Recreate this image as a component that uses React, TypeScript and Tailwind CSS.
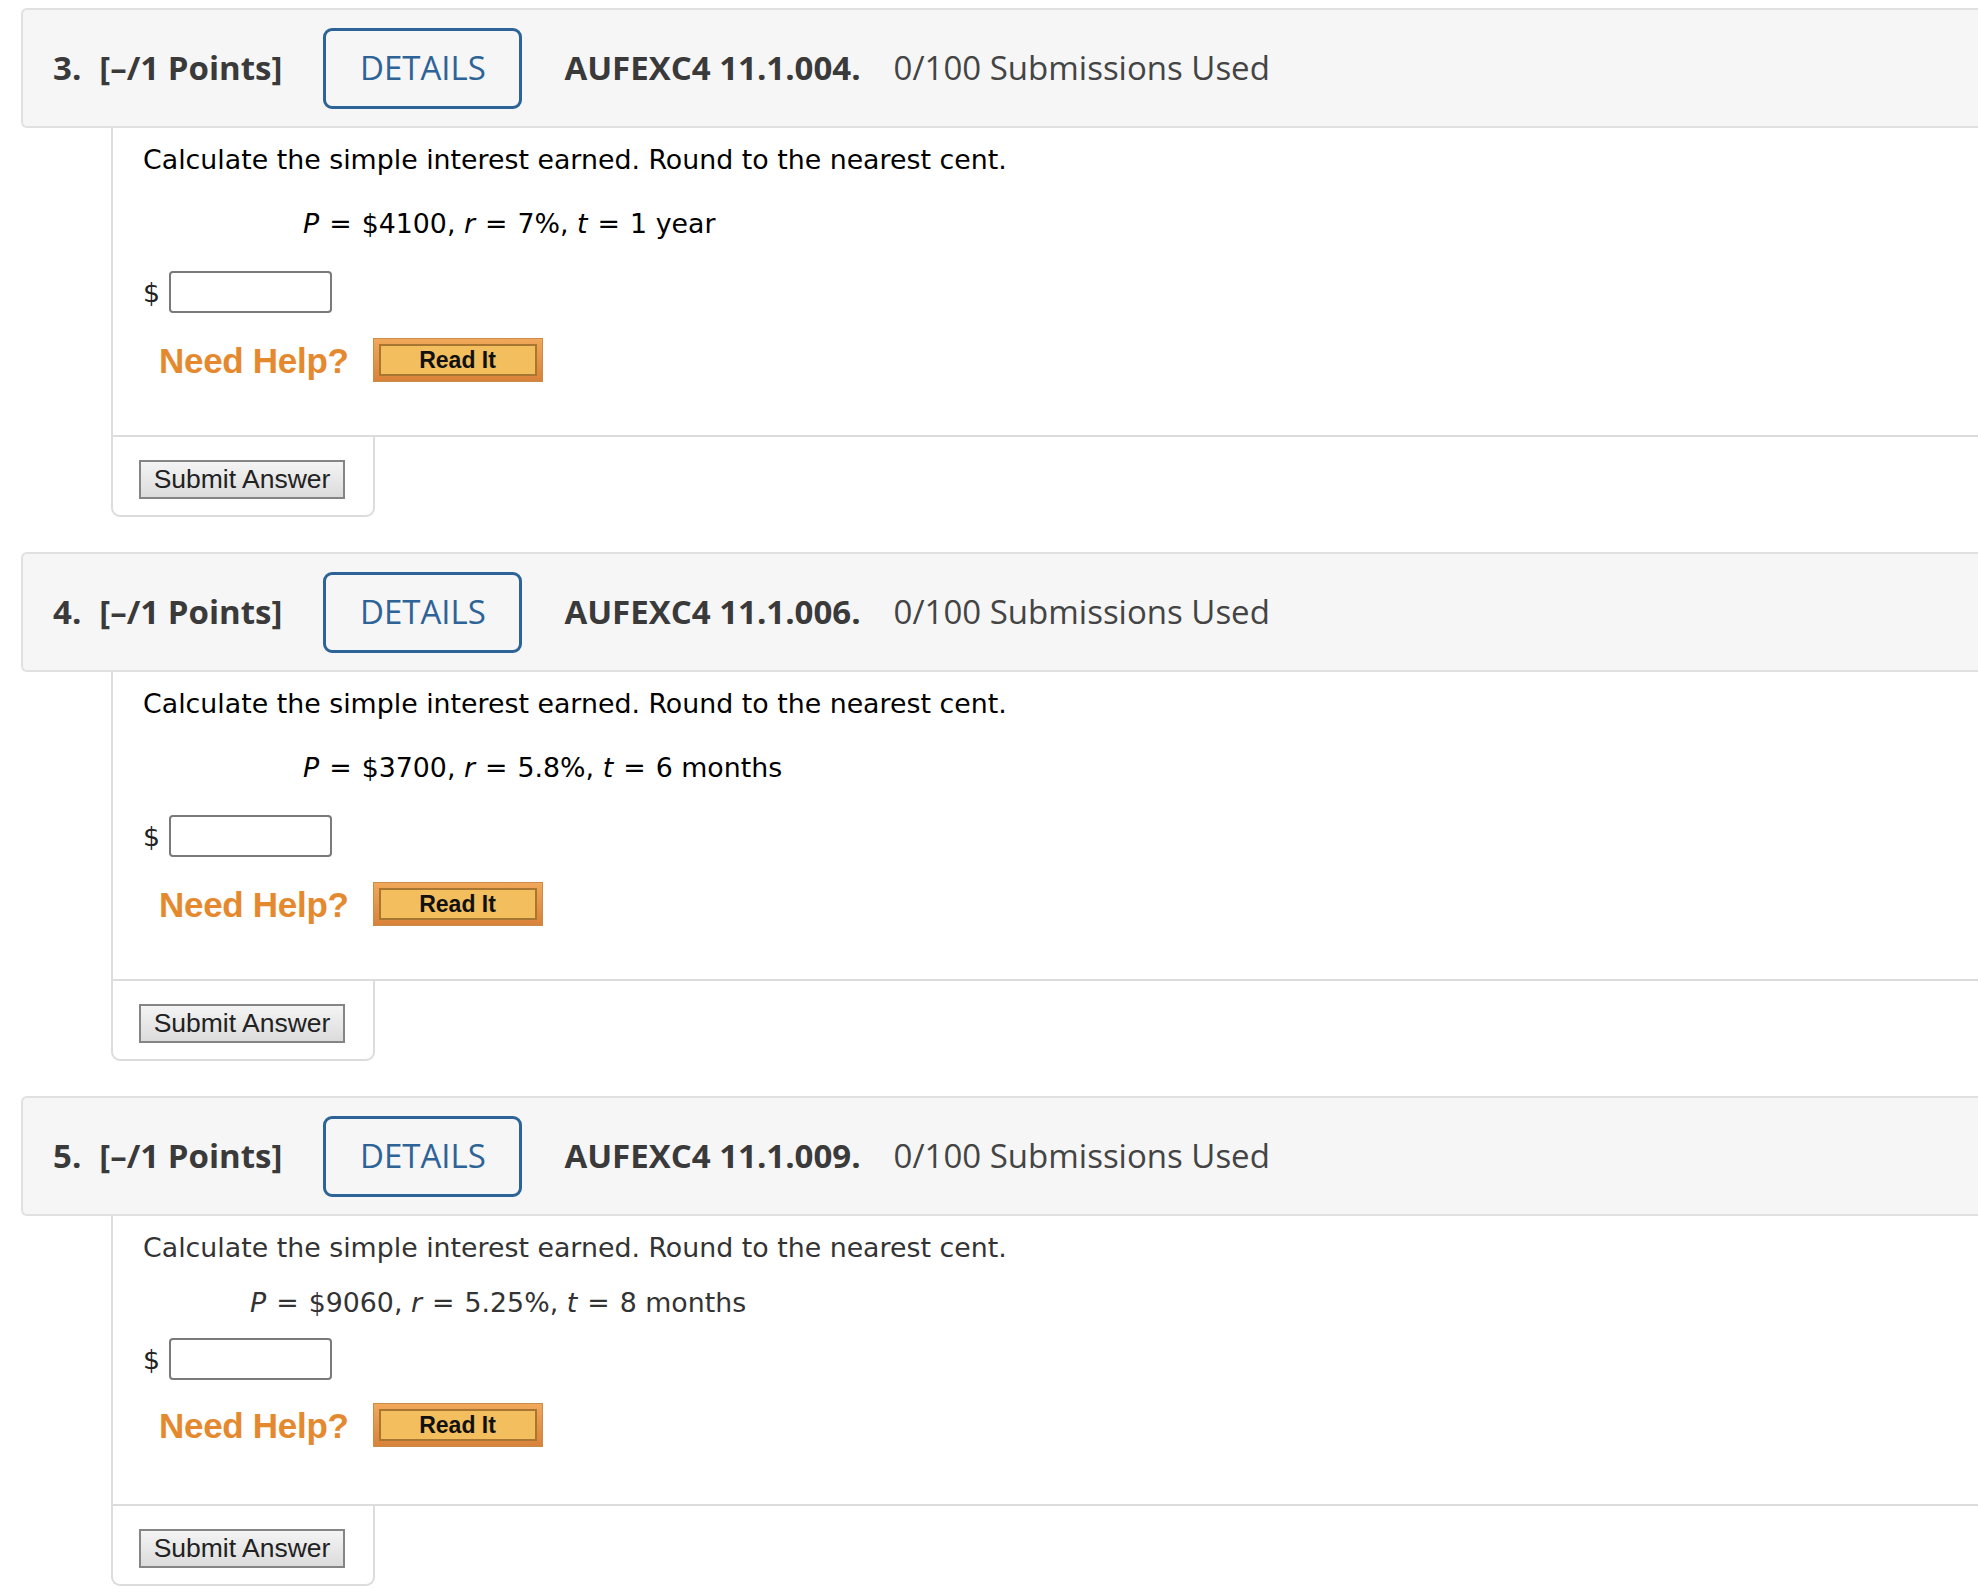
import type { ReactNode } from 'react';

type QuestionProps = {
  num: number;
  code: string;
  formula: ReactNode;
  compact?: boolean;
};

// spaced "=" like the math renderer does
const Eq = () => <span className="mx-[1.5px]">=</span>;

const Question = ({ num, code, formula, compact }: QuestionProps) => {
  return (
    <div>
      {/* header bar */}
      <div className="ml-[21px] h-[120px] bg-[#f6f6f6] border-2 border-r-0 border-[#e0e0e0] rounded-l-[6px] flex items-center pl-[30px] font-['Open_Sans',sans-serif] text-[33px] text-[#3a3a3a]">
        <span className="font-bold">{num}.</span>
        <span className="font-bold ml-[18px]">[–/1 Points]</span>
        <button className="ml-[41px] w-[199px] h-[81px] border-[3px] border-[#2e6398] rounded-[9px] text-[#2e6398] bg-[#f6f6f6] flex items-center justify-center font-['Open_Sans',sans-serif] font-medium">
          DETAILS
        </button>
        <span className="font-bold ml-[42px]">{code}</span>
        <span className="ml-[33px] text-[#444]">0/100 Submissions Used</span>
      </div>

      {/* question body */}
      <div
        className={
          compact
            ? "ml-[111px] border-l-2 border-b-2 border-[#dcdcdc] pl-[30px] pt-[12px] pb-[57px] font-['DejaVu_Sans',Verdana,sans-serif] text-[26.8px] leading-[39px] text-[#333]"
            : "ml-[111px] border-l-2 border-b-2 border-[#dcdcdc] pl-[30px] pt-[12px] pb-[53px] font-['DejaVu_Sans',Verdana,sans-serif] text-[26.8px] leading-[39px] text-black"
        }
      >
        <p>Calculate the simple interest earned. Round to the nearest cent.</p>
        <p className={compact ? 'mt-[16px] pl-[107px]' : 'mt-[25px] pl-[160px]'}>{formula}</p>
        <div className={compact ? 'mt-[16px] flex items-center' : 'mt-[28px] flex items-center'}>
          <span className="text-[#222]">$</span>
          <input
            type="text"
            className="ml-[9px] w-[163px] h-[42px] border-2 border-[#7a7a7a] rounded-[4px] bg-white outline-none"
          />
        </div>
        <div className={compact ? 'mt-[23px] flex items-center' : 'mt-[25px] flex items-center'}>
          <span className="ml-[16px] font-['Liberation_Sans',Arial,sans-serif] font-bold text-[35px] leading-none tracking-[-0.3px] text-[#e5892f]">
            Need Help?
          </span>
          <button className="ml-[24px] w-[170px] h-[44px] bg-gradient-to-b from-[#f0a85a] to-[#d9823a] border border-[#c98a4a] p-[5px]">
            <span className="flex w-full h-full items-center justify-center bg-[#f3be5e] border-2 border-[#a87630] font-['Liberation_Sans',Arial,sans-serif] font-bold text-[23px] leading-none text-[#111]">
              Read It
            </span>
          </button>
        </div>
      </div>

      {/* submit tab */}
      <div className="ml-[111px] w-[264px] border-2 border-t-0 border-[#dcdcdc] rounded-b-[9px] pl-[26px] pt-[23px] pb-[16px]">
        <button className="w-[206px] h-[39px] border-2 border-[#858585] bg-gradient-to-b from-[#f4f4f4] to-[#dcdcdc] font-['Liberation_Sans',Arial,sans-serif] text-[26.5px] leading-none text-[#222]">
          Submit Answer
        </button>
      </div>
    </div>
  );
};

const App = () => {
  return (
    <div className="min-h-screen w-full bg-white overflow-hidden pt-[8px]">
      <Question
        num={3}
        code="AUFEXC4 11.1.004."
        formula={
          <>
            <i>P</i> <Eq /> $4100, <i>r</i> <Eq /> 7%, <i>t</i> <Eq /> 1 year
          </>
        }
      />
      <div className="mt-[35px]">
        <Question
          num={4}
          code="AUFEXC4 11.1.006."
          formula={
            <>
              <i>P</i> <Eq /> $3700, <i>r</i> <Eq /> 5.8%, <i>t</i> <Eq /> 6 months
            </>
          }
        />
      </div>
      <div className="mt-[35px]">
        <Question
          num={5}
          code="AUFEXC4 11.1.009."
          compact
          formula={
            <>
              <i>P</i> <Eq /> $9060, <i>r</i> <Eq /> 5.25%, <i>t</i> <Eq /> 8 months
            </>
          }
        />
      </div>
    </div>
  );
};

export default App;
